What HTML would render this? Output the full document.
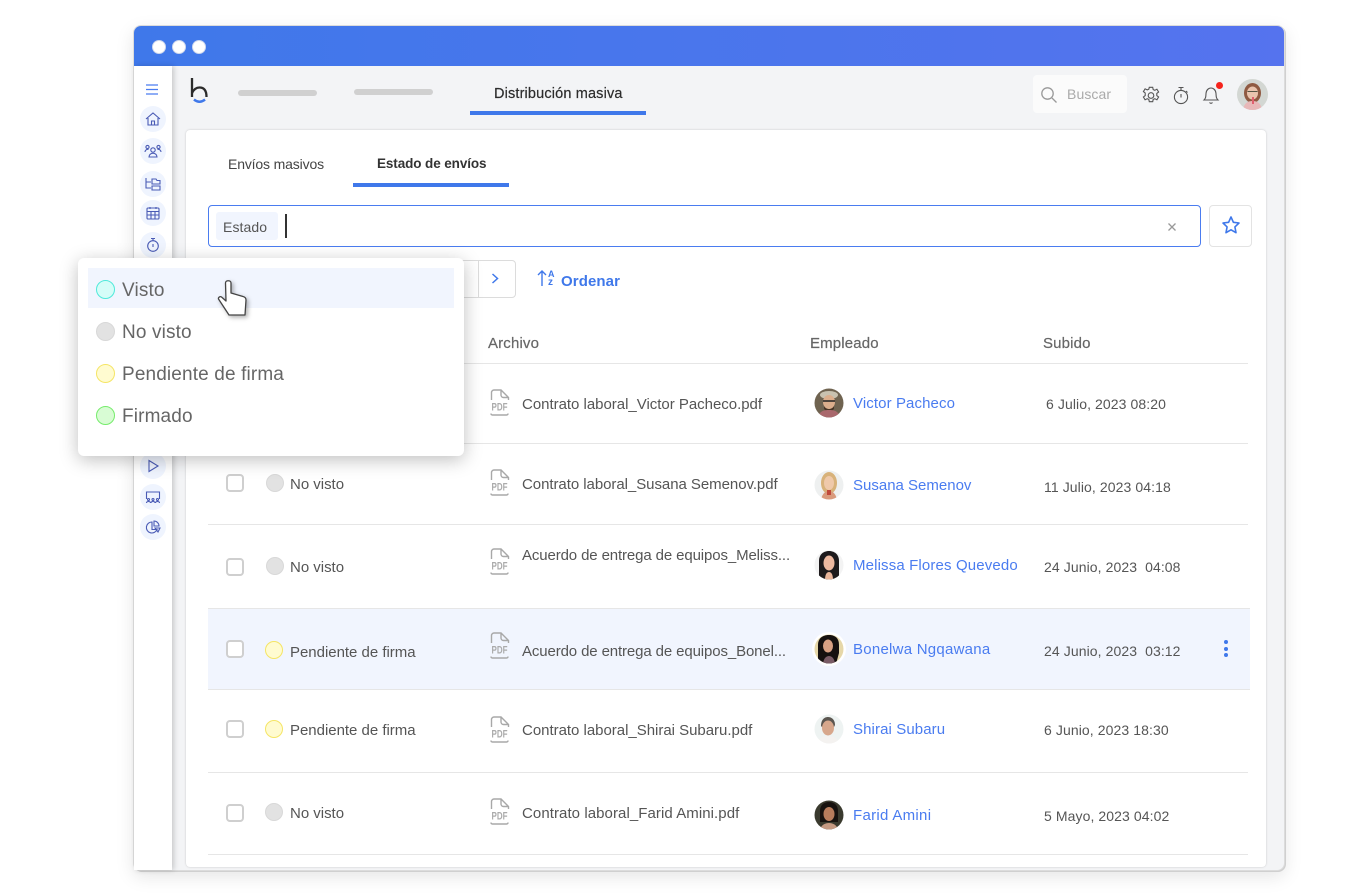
<!DOCTYPE html>
<html lang="es"><head><meta charset="utf-8"><title>Estado de envíos</title>
<style>
*{box-sizing:border-box}
html,body{margin:0;padding:0;width:1360px;height:896px;overflow:hidden;background:#fff;font-family:"Liberation Sans",sans-serif}
.a{position:absolute}
.t{position:absolute;white-space:nowrap;line-height:20px;font-size:15px;color:#555;letter-spacing:-.02px}
.r{margin-top:1px}
.l{color:#4a7cf0;letter-spacing:.1px;margin-top:1px}
.h{color:#666;letter-spacing:.15px;-webkit-text-stroke:.2px #666;margin-top:1px}
.dt{font-size:14px;letter-spacing:.09px}
.line{position:absolute;left:208px;width:1040px;height:1px;background:#e6e6e6}
.cb{position:absolute;left:226px;width:18px;height:18px;border:2px solid #cfcfcf;border-radius:4px;background:#fff}
.d{position:absolute;width:18px;height:18px;border-radius:50%;border:1px solid}
.g{background:#e2e2e2;border-color:#d8d8d8}
.y{background:#fffbd0;border-color:#f5e565}
.c{background:#d5fdf8;border-color:#4fe9da}
.gr{background:#d8fcd4;border-color:#76ec6c}
.sb{position:absolute;left:140px;width:26px;height:26px;border-radius:50%;background:#eff4fe}
.sb svg{position:absolute;left:4px;top:4px;width:18px;height:18px;fill:none;stroke:#4a5bb5;stroke-width:1.1}
.m{position:absolute;left:122px;font-size:19px;line-height:24px;color:#666;letter-spacing:.14px;white-space:nowrap}
.tb{position:absolute;top:40px;width:14px;height:14px;border-radius:50%;background:#fff;border:1px solid #cfd8ec}
</style></head><body>

<div class="a" style="left:133px;top:25px;width:1152px;height:846px;border-radius:8px;background:#f3f4f6;border:1px solid #dcdcdc;box-shadow:1px 1px 0 #d0d0d0,0 6px 18px rgba(0,0,0,.10);overflow:hidden">
  <div class="a" style="left:0;top:0;width:1150px;height:40px;background:linear-gradient(90deg,#3f78ea,#5573ee)"></div>
</div>
<div class="tb" style="left:152px"></div>
<div class="tb" style="left:172px"></div>
<div class="tb" style="left:192px"></div>

<!-- sidebar -->
<div class="a" style="left:134px;top:66px;width:38px;height:804px;background:#fff;box-shadow:2px 0 5px rgba(0,0,0,.18)"></div>
<svg class="a" style="left:146px;top:84px" width="12" height="11" fill="none" stroke="#4a7cf0" stroke-width="1.300"><path d="M0 1h12M0 5.500h12M0 10h12"/></svg>

<div class="sb" style="top:106px"><svg viewBox="0 0 18 18"><path d="M2 9 9 3l7 6M4 8v7h10V8M7.500 15v-4h3v4"/></svg></div>
<div class="sb" style="top:138px"><svg viewBox="0 0 18 18"><circle cx="9" cy="8" r="2.200"/><path d="M5 15c0-5 8-5 8 0z"/><circle cx="3.500" cy="5" r="1.600"/><circle cx="14.500" cy="5" r="1.600"/><path d="M1 10c0-2 2-3 3.500-2.500M17 10c0-2-2-3-3.500-2.500"/></svg></div>
<div class="sb" style="top:171px"><svg viewBox="0 0 18 18"><path d="M2 3v10h5M2 7h5M8 4h4l1 1.500h3V9H8zM8 11h8v4H8z"/></svg></div>
<div class="sb" style="top:200px"><svg viewBox="0 0 18 18"><rect x="3" y="4" width="12" height="11" rx="1"/><path d="M3 7.500h12M3 11h12M7 7.500V15M11 7.500V15M6 3v2M12 3v2"/></svg></div>
<div class="sb" style="top:232px"><svg viewBox="0 0 18 18"><circle cx="9" cy="10" r="5.300"/><path d="M7 2.500h4M9 2.500v2M9 8v3"/></svg></div>
<div class="sb" style="top:453px"><svg viewBox="0 0 18 18"><path d="M5 3.500v11L14 9z"/></svg></div>
<div class="sb" style="top:484px"><svg viewBox="0 0 18 18"><path d="M2.500 11V4h13v7"/><circle cx="4.500" cy="11.500" r="1"/><circle cx="9" cy="11.500" r="1"/><circle cx="13.500" cy="11.500" r="1"/><path d="M2.500 15c0-2 4-2 4 0M7 15c0-2 4-2 4 0M11.500 15c0-2 4-2 4 0"/></svg></div>
<div class="sb" style="top:514px"><svg viewBox="0 0 18 18"><path d="M8 4a5.500 5.500 0 1 0 5 7.500H8z"/><path d="M10 3a5 5 0 0 1 5 5h-5zM11 10h5l-2 4z"/></svg></div>

<!-- top nav -->
<svg class="a" style="left:190px;top:78px" width="20" height="27" fill="none"><path d="M2 0V19" stroke="#2b2b2b" stroke-width="2.300"/><path d="M2 15C4 11 7 9.500 9.500 9.500 13.500 9.500 16.500 12 16.500 19" stroke="#2b2b2b" stroke-width="2.300"/><path d="M4 21.500Q9.500 26 15 21.500" stroke="#3f78ea" stroke-width="2.500"/></svg>
<div class="a" style="left:238px;top:90px;width:79px;height:6px;border-radius:3px;background:#d0d0d0"></div>
<div class="a" style="left:354px;top:89px;width:79px;height:6px;border-radius:3px;background:#d0d0d0"></div>
<div class="t" style="left:494px;top:84px;font-size:14.500px;color:#2c2c2c;letter-spacing:.15px;-webkit-text-stroke:.2px #2c2c2c">Distribución masiva</div>
<div class="a" style="left:470px;top:111px;width:176px;height:4px;background:#3f78ea"></div>

<div class="a" style="left:1033px;top:75px;width:94px;height:38px;border-radius:4px;background:#fbfbfb"></div>
<svg class="a" style="left:1040px;top:86px" width="18" height="18" fill="none" stroke="#999" stroke-width="1.300"><circle cx="7.500" cy="7.500" r="5.700"/><path d="m12 12 4.500 4.500"/></svg>
<div class="t" style="left:1067px;top:84px;font-size:14px;color:#aaa;letter-spacing:.1px">Buscar</div>
<svg class="a" style="left:1142px;top:86px" width="18" height="19" viewBox="0 0 18 18" fill="none" stroke="#555" stroke-width="1.100"><circle cx="9" cy="9" r="2.800"/><path d="M7.300.8h3.400l.5 2.300 1.600.7 2.100-1.100 1.700 2.800-1.800 1.400v2.200l1.800 1.400-1.700 2.800-2.100-1.100-1.600.7-.5 2.300H7.300l-.5-2.300-1.600-.7-2.100 1.100-1.700-2.800 1.800-1.400V6.500L1.400 5.100l1.700-2.800 2.100 1.100 1.600-.7z"/></svg>
<svg class="a" style="left:1172px;top:86px" width="18" height="19" viewBox="0 0 18 19" fill="none" stroke="#555" stroke-width="1.100"><circle cx="9" cy="11" r="6.600"/><path d="M6.500 1.500h5M9 1.500v3M9 8v3.500M14 5l1.500 1.500"/></svg>
<svg class="a" style="left:1202px;top:86px" width="18" height="19" viewBox="0 0 18 19" fill="none" stroke="#555" stroke-width="1.100"><path d="M2 14c2-2 1.800-3.500 2-6.500C4.300 4 6.500 2 9 2s4.700 2 5 5.500c.2 3 0 4.500 2 6.500zM7.500 16.500c1 1 2 1 3 0"/></svg>
<div class="a" style="left:1216px;top:82px;width:7px;height:7px;border-radius:50%;background:#f5231c"></div>
<svg class="a" style="left:1237px;top:79px" width="31" height="31" viewBox="0 0 31 31"><defs><clipPath id="av"><circle cx="15.500" cy="15.500" r="15.500"/></clipPath></defs><g clip-path="url(#av)"><rect width="31" height="31" fill="#d3d7d3"/><ellipse cx="15.500" cy="14" rx="8.500" ry="10" fill="#8f5a42"/><ellipse cx="15.500" cy="14" rx="5.500" ry="6.500" fill="#e9c4ae"/><path d="M10.500 12.500h10" stroke="#554" stroke-width="1.100"/><path d="M6 31c1-7 5-9 9.500-9S24 24 25 31z" fill="#e8b8b8"/><path d="M15 18h2v7h-2z" fill="#e0606e"/></g></svg>

<!-- card -->
<div class="a" style="left:186px;top:130px;width:1080px;height:737px;border-radius:4px;background:#fff;box-shadow:0 0 2px rgba(0,0,0,.18)"></div>
<div class="t" style="left:228px;top:154px;font-size:14px;color:#444;letter-spacing:-.15px">Envíos masivos</div>
<div class="t" style="left:377px;top:154px;font-size:13.500px;color:#333;font-weight:700;letter-spacing:-.1px">Estado de envíos</div>
<div class="a" style="left:353px;top:183px;width:156px;height:4px;background:#3f78ea"></div>

<div class="a" style="left:208px;top:205px;width:993px;height:42px;border:1px solid #4a7cf0;border-radius:4px;background:#fff"></div>
<div class="a" style="left:216px;top:212px;width:62px;height:28px;border-radius:3px;background:#f1f5fe"></div>
<div class="t" style="left:223px;top:217px;font-size:14px;color:#555;letter-spacing:.1px">Estado</div>
<div class="a" style="left:285px;top:214px;width:2px;height:24px;background:#333"></div>
<svg class="a" style="left:1168px;top:223px" width="8" height="8" fill="none" stroke="#999" stroke-width="1.300"><path d="m.5.5 7 7M7.500.5l-7 7"/></svg>
<div class="a" style="left:1209px;top:205px;width:43px;height:42px;border:1px solid #e3e3e3;border-radius:4px;background:#fff"></div>
<svg class="a" style="left:1221px;top:215px" width="20" height="20" viewBox="0 0 20 20" fill="none" stroke="#3f78ea" stroke-width="1.600" stroke-linejoin="round"><path d="m10 2 2.400 5.300 5.600.7-4.100 3.900 1.100 5.800-5-2.900-5 2.900 1.100-5.800L2 8l5.600-.7z"/></svg>

<div class="a" style="left:440px;top:260px;width:76px;height:38px;border:1px solid #dcdcdc;border-radius:4px;background:#fff"></div>
<div class="a" style="left:478px;top:260px;width:1px;height:38px;background:#dcdcdc"></div>
<svg class="a" style="left:491px;top:273px" width="8" height="11" fill="none" stroke="#3f78ea" stroke-width="1.500"><path d="m1.500 1 5 4.500-5 4.500"/></svg>
<svg class="a" style="left:537px;top:269px" width="11" height="18" fill="none" stroke="#3f78ea" stroke-width="1.400"><path d="M5 17V2M1 6l4-4 4 4"/></svg>
<div class="t" style="left:548px;top:270px;font-size:9px;line-height:9px;color:#3f78ea;font-weight:700;letter-spacing:0">A</div>
<div class="t" style="left:548px;top:278px;font-size:10px;line-height:9px;color:#3f78ea;font-weight:700;letter-spacing:0">z</div>
<div class="t" style="left:561px;top:272px;font-size:15px;color:#3f78ea;font-weight:700;letter-spacing:.1px">Ordenar</div>

<!-- table -->
<div class="t h" style="left:488px;top:333px">Archivo</div>
<div class="t h" style="left:810px;top:333px">Empleado</div>
<div class="t h" style="left:1043px;top:333px">Subido</div>

<div class="a" style="left:208px;top:608px;width:1042px;height:82px;background:#f1f5fe"></div>
<div class="line" style="top:363px"></div>
<div class="line" style="top:443px"></div>
<div class="line" style="top:524px"></div>
<div class="line" style="top:608px;width:1042px"></div>
<div class="line" style="top:689px;width:1042px"></div>
<div class="line" style="top:772px"></div>
<div class="line" style="top:854px"></div>

<!-- status rows -->
<div class="cb" style="top:474px"></div><div class="d g" style="left:266px;top:474px"></div><div class="t r" style="left:290px;top:474px">No visto</div>
<div class="cb" style="top:558px"></div><div class="d g" style="left:266px;top:557px"></div><div class="t r" style="left:290px;top:557px">No visto</div>
<div class="cb" style="top:640px"></div><div class="d y" style="left:265px;top:641px"></div><div class="t r" style="left:290px;top:642px">Pendiente de firma</div>
<div class="cb" style="top:720px"></div><div class="d y" style="left:265px;top:720px"></div><div class="t r" style="left:290px;top:720px">Pendiente de firma</div>
<div class="cb" style="top:804px"></div><div class="d g" style="left:265px;top:803px"></div><div class="t r" style="left:290px;top:803px">No visto</div>

<!-- pdf icons -->
<svg width="0" height="0" style="position:absolute"><defs><g id="pdf" fill="none" stroke="#a8a8a8" stroke-width="1.400"><path d="M1.500 11V3.500a2.500 2.500 0 0 1 2.500-2.500h7l7.500 7.500V11M11 1v5a2.500 2.500 0 0 0 2.500 2.500h5M1 24.500c0 1 .7 1.500 1.500 1.500h14c.8 0 1.500-.5 1.500-1.500"/></g></defs></svg>
<svg class="a" style="left:490px;top:389px" width="20" height="28"><use href="#pdf"/><text x="1.500" y="21.500" textLength="16" lengthAdjust="spacingAndGlyphs" font-family="Liberation Sans" font-size="11" font-weight="700" fill="#ababab">PDF</text></svg>
<svg class="a" style="left:490px;top:469px" width="20" height="28"><use href="#pdf"/><text x="1.500" y="21.500" textLength="16" lengthAdjust="spacingAndGlyphs" font-family="Liberation Sans" font-size="11" font-weight="700" fill="#ababab">PDF</text></svg>
<svg class="a" style="left:490px;top:548px" width="20" height="28"><use href="#pdf"/><text x="1.500" y="21.500" textLength="16" lengthAdjust="spacingAndGlyphs" font-family="Liberation Sans" font-size="11" font-weight="700" fill="#ababab">PDF</text></svg>
<svg class="a" style="left:490px;top:632px" width="20" height="28"><use href="#pdf"/><text x="1.500" y="21.500" textLength="16" lengthAdjust="spacingAndGlyphs" font-family="Liberation Sans" font-size="11" font-weight="700" fill="#ababab">PDF</text></svg>
<svg class="a" style="left:490px;top:716px" width="20" height="28"><use href="#pdf"/><text x="1.500" y="21.500" textLength="16" lengthAdjust="spacingAndGlyphs" font-family="Liberation Sans" font-size="11" font-weight="700" fill="#ababab">PDF</text></svg>
<svg class="a" style="left:490px;top:798px" width="20" height="28"><use href="#pdf"/><text x="1.500" y="21.500" textLength="16" lengthAdjust="spacingAndGlyphs" font-family="Liberation Sans" font-size="11" font-weight="700" fill="#ababab">PDF</text></svg>

<div class="t r" style="left:522px;top:394px">Contrato laboral_Victor Pacheco.pdf</div>
<div class="t r" style="left:522px;top:474px;letter-spacing:-.05px">Contrato laboral_Susana Semenov.pdf</div>
<div class="t r" style="left:522px;top:545px;letter-spacing:-.12px">Acuerdo de entrega de equipos_Meliss...</div>
<div class="t r" style="left:522px;top:641px;letter-spacing:-.12px">Acuerdo de entrega de equipos_Bonel...</div>
<div class="t r" style="left:522px;top:720px">Contrato laboral_Shirai Subaru.pdf</div>
<div class="t r" style="left:522px;top:803px;letter-spacing:.07px">Contrato laboral_Farid Amini.pdf</div>

<!-- avatars -->
<svg class="a" style="left:814px;top:388px" width="30" height="30" viewBox="0 0 30 30"><defs><clipPath id="c1"><circle cx="15" cy="15" r="14.500"/></clipPath></defs><g clip-path="url(#c1)"><rect width="30" height="30" fill="#6f6350"/><ellipse cx="15" cy="7" rx="9" ry="4" fill="#c9c2b0"/><ellipse cx="15" cy="14" rx="6" ry="7" fill="#dcae8c"/><path d="M9 13h12" stroke="#222" stroke-width="1.500"/><path d="M10 18c2 4 8 4 10 0v3c-3 3-7 3-10 0z" fill="#4a3526"/><path d="M4 30c1-7 6-8 11-8s10 1 11 8z" fill="#a9686c"/></g></svg>
<svg class="a" style="left:814px;top:470px" width="30" height="30" viewBox="0 0 30 30"><defs><clipPath id="c2"><circle cx="15" cy="15" r="14.500"/></clipPath></defs><g clip-path="url(#c2)"><rect width="30" height="30" fill="#eef0f0"/><ellipse cx="15" cy="13" rx="8" ry="11" fill="#d8b27a"/><ellipse cx="15" cy="13" rx="5" ry="7" fill="#efc9aa"/><path d="M7 30c1-6 4-9 8-9s7 3 8 9z" fill="#d99a7c"/><path d="M13 20h4v5h-4z" fill="#c0483a"/></g></svg>
<svg class="a" style="left:814px;top:550px" width="30" height="30" viewBox="0 0 30 30"><defs><clipPath id="c3"><circle cx="15" cy="15" r="14.500"/></clipPath></defs><g clip-path="url(#c3)"><rect width="30" height="30" fill="#f3f3f3"/><path d="M5 30V11C5 4 10 1 15 1s10 3 10 10v19z" fill="#1d1a1c"/><ellipse cx="15" cy="13" rx="5.500" ry="7.500" fill="#edb9a0"/><path d="M11 30c0-6 2-8 4-8s4 2 4 8z" fill="#e8b59a"/></g></svg>
<svg class="a" style="left:812px;top:632px" width="34" height="34" viewBox="0 0 34 34"><circle cx="17" cy="17" r="17" fill="#fff"/><defs><clipPath id="c4"><circle cx="17" cy="17" r="14.500"/></clipPath></defs><g clip-path="url(#c4)"><rect width="34" height="34" fill="#e6d7a8"/><path d="M6 32V13C6 6 11 3 17 3s10 3 10 10v8l-3 11z" fill="#16110f"/><ellipse cx="16" cy="14" rx="5" ry="6.500" fill="#d9a183"/><path d="M11 33c0-6 3-9 6-9s6 3 6 9z" fill="#7a5c66"/></g></svg>
<svg class="a" style="left:814px;top:714px" width="30" height="30" viewBox="0 0 30 30"><defs><clipPath id="c5"><circle cx="15" cy="15" r="14.500"/></clipPath></defs><g clip-path="url(#c5)"><rect width="30" height="30" fill="#eef3f2"/><path d="M7 12c0-7 4-9 7-9s7 2 7 8l-1 2H8z" fill="#5b5650"/><ellipse cx="14" cy="14" rx="6" ry="7.500" fill="#d7a78c"/><path d="M3 30c1-6 6-8 11-8s10 2 11 8z" fill="#f4f2f0"/></g></svg>
<svg class="a" style="left:814px;top:800px" width="30" height="30" viewBox="0 0 30 30"><defs><clipPath id="c6"><circle cx="15" cy="15" r="14.500"/></clipPath></defs><g clip-path="url(#c6)"><rect width="30" height="30" fill="#3a3a2e"/><path d="M6 22V11C6 5 10 2 15 2s9 3 9 9v11z" fill="#17120f"/><ellipse cx="15" cy="14" rx="5.500" ry="7" fill="#b77c5c"/><path d="M6 30c1-5 5-7 9-7s8 2 9 7z" fill="#c59a82"/></g></svg>

<div class="t l" style="left:853px;top:393px">Victor Pacheco</div>
<div class="t l" style="left:853px;top:475px;letter-spacing:0">Susana Semenov</div>
<div class="t l" style="left:853px;top:555px;letter-spacing:.14px">Melissa Flores Quevedo</div>
<div class="t l" style="left:853px;top:639px;letter-spacing:.25px">Bonelwa Ngqawana</div>
<div class="t l" style="left:853px;top:719px">Shirai Subaru</div>
<div class="t l" style="left:853px;top:805px;letter-spacing:.3px">Farid Amini</div>

<div class="t dt" style="left:1046px;top:394px">6 Julio, 2023 08:20</div>
<div class="t dt" style="left:1044px;top:477px">11 Julio, 2023 04:18</div>
<div class="t dt" style="left:1044px;top:557px">24 Junio, 2023&nbsp; 04:08</div>
<div class="t dt" style="left:1044px;top:641px">24 Junio, 2023&nbsp; 03:12</div>
<div class="t dt" style="left:1044px;top:720px">6 Junio, 2023 18:30</div>
<div class="t dt" style="left:1044px;top:806px">5 Mayo, 2023 04:02</div>

<div class="a" style="left:1224px;top:640px;width:4px;height:4px;border-radius:50%;background:#3f78ea"></div>
<div class="a" style="left:1224px;top:647px;width:4px;height:4px;border-radius:50%;background:#3f78ea"></div>
<div class="a" style="left:1224px;top:653px;width:4px;height:4px;border-radius:50%;background:#3f78ea"></div>

<!-- dropdown -->
<div class="a" style="left:78px;top:258px;width:386px;height:198px;border-radius:6px;background:#fff;box-shadow:0 4px 18px rgba(0,0,0,.25)"></div>
<div class="a" style="left:88px;top:268px;width:366px;height:40px;background:#f1f5fe"></div>
<div class="d c" style="left:96px;top:280px;width:19px;height:19px"></div><div class="m" style="top:279px">Visto</div>
<div class="d g" style="left:96px;top:322px;width:19px;height:19px"></div><div class="m" style="top:321px">No visto</div>
<div class="d y" style="left:96px;top:364px;width:19px;height:19px"></div><div class="m" style="top:363px">Pendiente de firma</div>
<div class="d gr" style="left:96px;top:406px;width:19px;height:19px"></div><div class="m" style="top:405px">Firmado</div>

<svg class="a" style="left:216px;top:278px;filter:drop-shadow(2px 2px 2px rgba(0,0,0,.3))" width="34" height="41" viewBox="0 0 34 41"><path d="M9.500 5c0-3 5.500-3 5.500 0V15L27 18.500c2 .5 3 1.500 3 3.500L29 37H13L2.500 21c-.5-1.500 1.500-3 3-2L10 23z" fill="#fff" stroke="#444" stroke-width="1.300" stroke-linejoin="round"/></svg>

</body></html>
